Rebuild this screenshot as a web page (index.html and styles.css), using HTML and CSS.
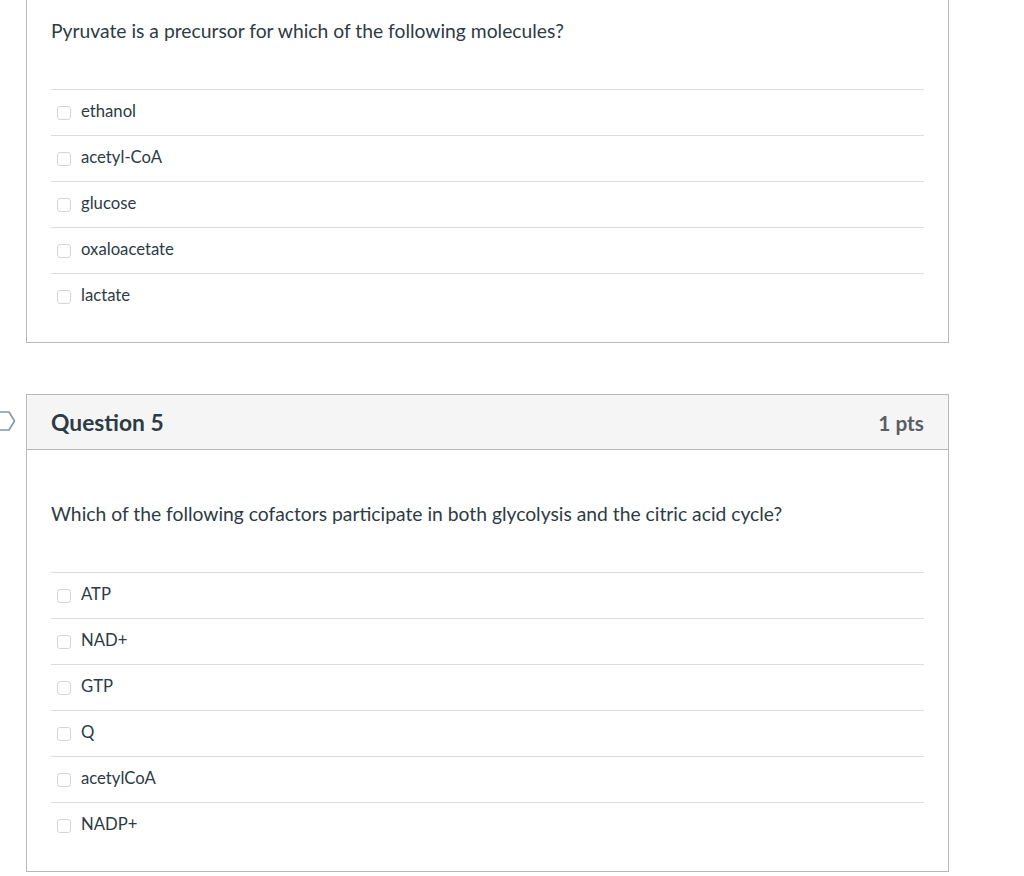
FILE: index.html
```html
<!DOCTYPE html>
<html>
<head>
<meta charset="utf-8">
<link rel="stylesheet" href="styles.css">
</head>
<body>
<div class="page">
  <div class="row">
    <div class="gutter"></div>
    <div class="card card-first">
      <div class="card-body">
        <div class="qtext">Pyruvate is a precursor for which of the following molecules?</div>
        <div class="answers">
          <div class="answer"><span class="box"></span><span class="label">ethanol</span></div>
          <div class="answer"><span class="box"></span><span class="label">acetyl-CoA</span></div>
          <div class="answer"><span class="box"></span><span class="label">glucose</span></div>
          <div class="answer"><span class="box"></span><span class="label">oxaloacetate</span></div>
          <div class="answer"><span class="box"></span><span class="label">lactate</span></div>
        </div>
      </div>
    </div>
  </div>
  <div class="row row-second">
    <div class="gutter">
      <svg class="marker" width="16" height="22" viewBox="0 0 16 22"><path d="M-6 2 H9 L14.5 11 L9 20 H-6" fill="none" stroke="#7f98ad" stroke-width="1.6" stroke-linejoin="round"/></svg>
    </div>
    <div class="card">
      <div class="card-header">
        <div class="qtitle">Question 5</div>
        <div class="pts">1 pts</div>
      </div>
      <div class="card-body body-second">
        <div class="qtext">Which of the following cofactors participate in both glycolysis and the citric acid cycle?</div>
        <div class="answers">
          <div class="answer"><span class="box"></span><span class="label">ATP</span></div>
          <div class="answer"><span class="box"></span><span class="label">NAD+</span></div>
          <div class="answer"><span class="box"></span><span class="label">GTP</span></div>
          <div class="answer"><span class="box"></span><span class="label">Q</span></div>
          <div class="answer"><span class="box"></span><span class="label">acetylCoA</span></div>
          <div class="answer"><span class="box"></span><span class="label">NADP+</span></div>
        </div>
      </div>
    </div>
  </div>
</div>
</body>
</html>
```
FILE: styles.css
```css
html, body {
  margin: 0;
  padding: 0;
  background: #ffffff;
}
body {
  font-family: Lato, "Open Sans", sans-serif;
  color: #2d3b45;
  overflow: hidden;
}
.page {
  width: 1024px;
}
.row {
  display: flex;
  align-items: flex-start;
}
.gutter {
  width: 26px;
  flex: 0 0 26px;
}
.card {
  width: 921px;
  border: 1px solid #b4b9bd;
  background: #fff;
}
.card-first {
  margin-top: -40px;
}
.row-second {
  margin-top: 51px;
}
.marker {
  display: block;
  margin-top: 16px;
}
.card-header {
  height: 54px;
  background: #f5f5f5;
  border-bottom: 1px solid #b4b9bd;
  display: flex;
  align-items: center;
  justify-content: space-between;
  padding: 0 24px;
}
.qtitle {
  font-weight: 700;
  font-size: 22.8px;
  color: #2d3b45;
}
.pts {
  font-weight: 700;
  font-size: 20.8px;
  color: #585e63;
}
.card-body {
  padding: 56px 24px 23px 24px;
}
.body-second {
  padding-top: 50px;
}
.qtext {
  font-size: 19.3px;
  line-height: 28px;
}
.answers {
  margin-top: 44px;
}
.answer {
  height: 42px;
  padding-bottom: 3px;
  border-top: 1px solid #dcdfe1;
  display: flex;
  align-items: center;
  padding-left: 6px;
}
.box {
  width: 12px;
  height: 12px;
  border: 1px solid #d4d6d8;
  border-radius: 3px;
  background: #fff;
  margin-right: 10px;
  margin-top: 3px;
}
.label {
  font-size: 16.7px;
  color: #2d3b45;
}
```
